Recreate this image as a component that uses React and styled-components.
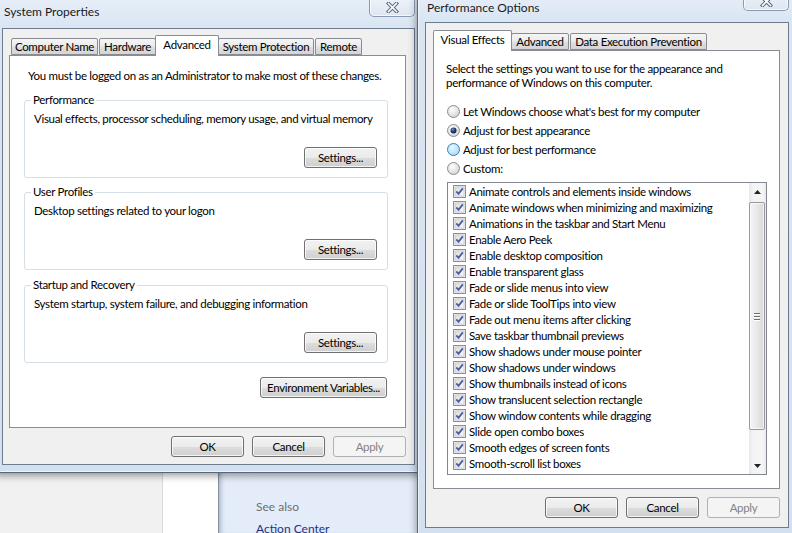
import React from 'react';
import styled, { createGlobalStyle } from 'styled-components';

const UI_FONT = '"Lato", "Noto Sans", "Liberation Sans", sans-serif';
const TEXT_SIZE = '11.5px';
const TRACKING = '-0.32px';

const GlobalStyle = createGlobalStyle`
  html, body {
    margin: 0;
    padding: 0;
  }
  body {
    width: 792px;
    height: 533px;
    overflow: hidden;
    background: #f1f1f1;
    font-family: ${UI_FONT};
    font-size: ${TEXT_SIZE};
    letter-spacing: ${TRACKING};
    color: #000;
  }
`;

const Desktop = styled.div`
  position: relative;
  width: 792px;
  height: 533px;
  overflow: hidden;
`;

/* what shows of the windows behind the dialogs */
const Backdrop = styled.div`
  display: flex;
  height: 100%;
`;

const SidePane = styled.div`
  width: 162px;
  background: #f1f1f1;
  border-right: 1px solid #d9d9d9;
`;

const WhiteStrip = styled.div`
  width: 55px;
  background: #fff;
`;

const NavPane = styled.div`
  flex: 1;
  display: flex;
  flex-direction: column;
  padding: 499px 0 0 37px;
  font-size: 12px;
  letter-spacing: 0;
  background: linear-gradient(180deg, #ecf2fb 0%, #e3ecf8 100%);
  border-left: 1px solid #7f8ea3;
  box-shadow: inset 5px 0 4px -3px rgba(40, 60, 90, 0.3);
`;

const NavHeading = styled.div`
  line-height: 16px;
  color: #6e6e6e;
`;

const NavLink = styled.div`
  margin-top: 6px;
  line-height: 16px;
  color: #1e3287;
`;

/* dialog windows */
const Window = styled.div`
  position: absolute;
  left: ${p => p.$x}px;
  top: ${p => p.$y}px;
  width: ${p => p.$w}px;
  height: ${p => p.$h}px;
  box-sizing: border-box;
  display: flex;
  flex-direction: column;
  padding: 0 7px 7px;
  border: 1px solid #56677d;
  border-radius: 7px 7px 0 0;
  background: linear-gradient(180deg, #e6eef8 0px, #d9e5f3 30px, #d3e0ef 100%);
  box-shadow: 0 2px 9px rgba(0, 0, 0, 0.45), inset 0 0 0 1px rgba(255, 255, 255, 0.6);
`;

const TitleBar = styled.div`
  height: 29px;
  display: flex;
  justify-content: space-between;
  align-items: flex-start;
`;

const Title = styled.div`
  padding: ${p => p.$top}px 0 0 2px;
  font-size: 12px;
  letter-spacing: 0;
  line-height: 16px;
  color: #1a1a1a;
`;

const CloseButton = styled.div`
  box-sizing: border-box;
  width: 46px;
  height: 19px;
  margin-top: -1px;
  display: flex;
  align-items: center;
  justify-content: center;
  border: 1px solid #8a9ab0;
  border-top: none;
  border-radius: 0 0 5px 5px;
  background: linear-gradient(180deg, #eef3fa 0%, #dde6f1 100%);
  box-shadow: inset 0 0 0 1px rgba(255, 255, 255, 0.7);
`;

const Client = styled.div`
  flex: 1;
  display: flex;
  flex-direction: column;
  padding: ${p => p.$pad};
  background: #f0f0f0;
  border: 1px solid #6c7b8e;
`;

const TabStrip = styled.div`
  position: relative;
  z-index: 1;
  display: flex;
  align-items: flex-end;
  height: 21px;
  margin-bottom: -1px;
  padding-left: 2px;
`;

const Tab = styled.div`
  box-sizing: border-box;
  width: ${p => p.$w + (p.$active ? 4 : 0)}px;
  height: ${p => (p.$active ? 21 : 17)}px;
  margin: ${p => (p.$active ? '0 -1px 0 -2px' : '0 1px 1px 0')};
  padding-bottom: ${p => (p.$active ? 3 : 0)}px;
  position: relative;
  z-index: ${p => (p.$active ? 2 : 1)};
  display: flex;
  align-items: center;
  justify-content: center;
  white-space: nowrap;
  border: 1px solid #898c95;
  border-bottom: ${p => (p.$active ? 'none' : '1px solid #898c95')};
  border-radius: 2px 2px 0 0;
  background: ${p =>
    p.$active
      ? '#fff'
      : 'linear-gradient(180deg, #f5f5f5 0%, #ececec 45%, #e0e0e0 55%, #d4d4d4 100%)'};
`;

const TabPanel = styled.div`
  flex: 1;
  display: flex;
  flex-direction: column;
  padding: ${p => p.$pad};
  background: #fff;
  border: 1px solid #898c95;
`;

const ButtonRow = styled.div`
  display: flex;
  justify-content: flex-end;
  gap: 8px;
  margin-top: 8px;
`;

const Button = styled.button`
  box-sizing: border-box;
  width: ${p => p.$w || 73}px;
  height: 21px;
  padding: 0;
  flex: none;
  align-self: ${p => p.$align || 'auto'};
  margin: ${p => p.$margin || 0};
  white-space: nowrap;
  font-family: ${UI_FONT};
  font-size: ${TEXT_SIZE};
  letter-spacing: ${TRACKING};
  color: ${p => (p.disabled ? '#838383' : '#000')};
  border: 1px solid ${p => (p.disabled ? '#adb2b5' : '#707070')};
  border-radius: 3px;
  background: ${p =>
    p.disabled
      ? '#f4f4f4'
      : 'linear-gradient(180deg, #f2f2f2 0%, #ebebeb 50%, #dddddd 51%, #cfcfcf 100%)'};
  box-shadow: ${p => (p.disabled ? 'none' : 'inset 0 0 0 1px rgba(255, 255, 255, 0.75)')};
`;

/* System Properties */
const Notice = styled.div`
  margin-left: 4px;
  line-height: 14px;
  white-space: nowrap;
`;

const Group = styled.fieldset`
  margin: ${p => p.$gap}px 0 0;
  padding: 5px 10px 9px 9px;
  display: flex;
  flex-direction: column;
  border: 1px solid #d5dfe5;
  border-radius: 3px;
  box-shadow: inset 0 0 0 1px #fff;
`;

const Legend = styled.legend`
  margin-left: -3px;
  padding: 0 2px;
  line-height: 14px;
`;

const GroupText = styled.div`
  line-height: 14px;
  white-space: nowrap;
`;

/* Performance Options */
const Intro = styled.div`
  line-height: 14px;
`;

const RadioList = styled.div`
  margin: 12px 0 0 1px;
  display: flex;
  flex-direction: column;
`;

const RadioRow = styled.label`
  height: 19px;
  display: flex;
  align-items: center;
  gap: 3px;
`;

const ListBox = styled.div`
  box-sizing: border-box;
  width: 320px;
  height: 293px;
  margin: 4px 0 0 1px;
  display: flex;
  border: 1px solid #828790;
  background: #fff;
`;

const Items = styled.div`
  flex: 1;
  display: flex;
  flex-direction: column;
`;

const ItemRow = styled.div`
  height: 16px;
  padding-left: 5px;
  display: flex;
  align-items: center;
  gap: 3px;
  white-space: nowrap;
`;

const ScrollBar = styled.div`
  width: 17px;
  display: flex;
  flex-direction: column;
  background: linear-gradient(90deg, #e6e6e6 0%, #f3f3f3 20%, #f5f5f5 80%, #e9e9e9 100%);
`;

const ScrollArrow = styled.div`
  height: 17px;
  display: flex;
  align-items: center;
  justify-content: center;
`;

const Thumb = styled.div`
  box-sizing: border-box;
  height: 228px;
  margin: 2px 1px 0 0;
  display: flex;
  flex-direction: column;
  align-items: center;
  justify-content: center;
  gap: 2px;
  border: 1px solid #979797;
  border-radius: 2px;
  background: linear-gradient(90deg, #f4f4f4 0%, #e9e9e9 50%, #d8d8d8 100%);
  box-shadow: inset 0 0 0 1px rgba(255, 255, 255, 0.7);
`;

const Grip = styled.div`
  width: 6px;
  height: 1px;
  background: #6f6f6f;
  box-shadow: 0 1px 0 #fff;
`;

const Spacer = styled.div`
  flex: 1;
`;

const CloseGlyph = () => (
  <svg width="13" height="11" viewBox="0 0 13 11">
    <path d="M2.5 1.5 L10.5 9.5 M10.5 1.5 L2.5 9.5" stroke="#5d6876" strokeWidth="3.6" strokeLinecap="square" />
    <path d="M2.5 1.5 L10.5 9.5 M10.5 1.5 L2.5 9.5" stroke="#fff" strokeWidth="1.6" strokeLinecap="square" />
  </svg>
);

const Radio = ({ checked, hot }) => (
  <svg width="13" height="13" viewBox="0 0 13 13">
    <defs>
      <radialGradient id="rNorm" cx="0.4" cy="0.35" r="0.7">
        <stop offset="0" stopColor="#ffffff" />
        <stop offset="1" stopColor="#d2d2d2" />
      </radialGradient>
      <radialGradient id="rHot" cx="0.4" cy="0.35" r="0.7">
        <stop offset="0" stopColor="#eaf7ff" />
        <stop offset="1" stopColor="#a9d8f5" />
      </radialGradient>
      <radialGradient id="rDot" cx="0.4" cy="0.35" r="0.7">
        <stop offset="0" stopColor="#7e98c8" />
        <stop offset="0.5" stopColor="#1f3d74" />
        <stop offset="1" stopColor="#0d1f42" />
      </radialGradient>
    </defs>
    <circle cx="6.5" cy="6.5" r="6" fill={hot ? 'url(#rHot)' : 'url(#rNorm)'} stroke={hot ? '#3c7fb1' : '#8d8d8d'} />
    {checked && <circle cx="6.5" cy="6.5" r="3" fill="url(#rDot)" />}
  </svg>
);

const Check = () => (
  <svg width="13" height="13" viewBox="0 0 13 13">
    <defs>
      <linearGradient id="cbFill" x1="0" y1="0" x2="1" y2="1">
        <stop offset="0" stopColor="#dcdcdc" />
        <stop offset="1" stopColor="#fbfbfb" />
      </linearGradient>
    </defs>
    <rect x="0.5" y="0.5" width="12" height="12" fill="#f4f4f4" stroke="#8e8f8f" />
    <rect x="2" y="2" width="9" height="9" fill="url(#cbFill)" stroke="#c4c4c4" strokeWidth="0.8" />
    <path d="M3.3 6.4 L5.5 8.8 L9.8 3.4" fill="none" stroke="#4b5fa8" strokeWidth="1.9" />
  </svg>
);

const Arrow = ({ down }) => (
  <svg width="7" height="4" viewBox="0 0 7 4">
    <path d={down ? 'M0 0 H7 L3.5 4 Z' : 'M0 4 H7 L3.5 0 Z'} fill="#222" />
  </svg>
);

const sysTabs = [
  { label: 'Computer Name', w: 87 },
  { label: 'Hardware', w: 57 },
  { label: 'Advanced', w: 60, active: true },
  { label: 'System Protection', w: 96 },
  { label: 'Remote', w: 47 },
];

const perfTabs = [
  { label: 'Visual Effects', w: 75, active: true },
  { label: 'Advanced', w: 58 },
  { label: 'Data Execution Prevention', w: 137 },
];

const groups = [
  { title: 'Performance', gap: 10, text: 'Visual effects, processor scheduling, memory usage, and virtual memory' },
  { title: 'User Profiles', gap: 7, text: 'Desktop settings related to your logon' },
  { title: 'Startup and Recovery', gap: 8, text: 'System startup, system failure, and debugging information' },
];

const radios = [
  { label: "Let Windows choose what's best for my computer" },
  { label: 'Adjust for best appearance', checked: true },
  { label: 'Adjust for best performance', hot: true },
  { label: 'Custom:' },
];

const effects = [
  'Animate controls and elements inside windows',
  'Animate windows when minimizing and maximizing',
  'Animations in the taskbar and Start Menu',
  'Enable Aero Peek',
  'Enable desktop composition',
  'Enable transparent glass',
  'Fade or slide menus into view',
  'Fade or slide ToolTips into view',
  'Fade out menu items after clicking',
  'Save taskbar thumbnail previews',
  'Show shadows under mouse pointer',
  'Show shadows under windows',
  'Show thumbnails instead of icons',
  'Show translucent selection rectangle',
  'Show window contents while dragging',
  'Slide open combo boxes',
  'Smooth edges of screen fonts',
  'Smooth-scroll list boxes',
];

const Tabs = ({ tabs }) => (
  <TabStrip>
    {tabs.map(t => (
      <Tab key={t.label} $w={t.w} $active={t.active}>
        {t.label}
      </Tab>
    ))}
  </TabStrip>
);

const DialogButtons = () => (
  <ButtonRow>
    <Button>OK</Button>
    <Button>Cancel</Button>
    <Button disabled>Apply</Button>
  </ButtonRow>
);

export default function App() {
  return (
    <Desktop>
      <GlobalStyle />
      <Backdrop>
        <SidePane />
        <WhiteStrip />
        <NavPane>
          <NavHeading>See also</NavHeading>
          <NavLink>Action Center</NavLink>
        </NavPane>
      </Backdrop>

      <Window $x={-6} $y={-2} $w={429} $h={475}>
        <TitleBar>
          <Title $top={5}>System Properties</Title>
          <CloseButton>
            <CloseGlyph />
          </CloseButton>
        </TitleBar>
        <Client $pad="6px 8px 7px 6px">
          <Tabs tabs={sysTabs} />
          <TabPanel $pad="13px 17px 0 14px">
            <Notice>You must be logged on as an Administrator to make most of these changes.</Notice>
            {groups.map(g => (
              <Group key={g.title} $gap={g.gap}>
                <Legend>{g.title}</Legend>
                <GroupText>{g.text}</GroupText>
                <Button $align="flex-end" $margin="21px 0 0">Settings...</Button>
              </Group>
            ))}
            <Button $w={127} $align="flex-end" $margin="14px 1px 0 0">Environment Variables...</Button>
          </TabPanel>
          <DialogButtons />
        </Client>
      </Window>

      <Window $x={417} $y={-8} $w={380} $h={544}>
        <TitleBar>
          <Title $top={7}>Performance Options</Title>
          <CloseButton>
            <CloseGlyph />
          </CloseButton>
        </TitleBar>
        <Client $pad="7px 8px 9px 7px">
          <Tabs tabs={perfTabs} />
          <TabPanel $pad="11px 12px 0 12px">
            <Intro>
              Select the settings you want to use for the appearance and
              <br />
              performance of Windows on this computer.
            </Intro>
            <RadioList>
              {radios.map(r => (
                <RadioRow key={r.label}>
                  <Radio checked={r.checked} hot={r.hot} />
                  {r.label}
                </RadioRow>
              ))}
            </RadioList>
            <ListBox>
              <Items>
                {effects.map(e => (
                  <ItemRow key={e}>
                    <Check />
                    {e}
                  </ItemRow>
                ))}
              </Items>
              <ScrollBar>
                <ScrollArrow>
                  <Arrow />
                </ScrollArrow>
                <Thumb>
                  <Grip />
                  <Grip />
                  <Grip />
                </Thumb>
                <Spacer />
                <ScrollArrow>
                  <Arrow down />
                </ScrollArrow>
              </ScrollBar>
            </ListBox>
          </TabPanel>
          <DialogButtons />
        </Client>
      </Window>
    </Desktop>
  );
}
